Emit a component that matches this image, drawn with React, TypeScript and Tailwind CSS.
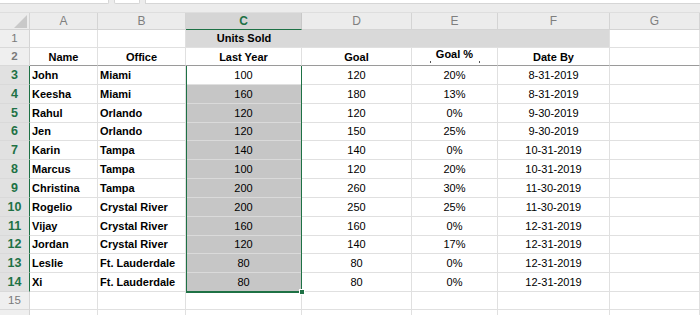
import React from "react";

const colW = ["w-[68px]", "w-[88px]", "w-[116px]", "w-[110px]", "w-[86px]", "w-[112px]", "w-[90px]"];
const letters = ["A", "B", "C", "D", "E", "F", "G"];

const data: [string, string, string, string, string, string][] = [
  ["John", "Miami", "100", "120", "20%", "8-31-2019"],
  ["Keesha", "Miami", "160", "180", "13%", "8-31-2019"],
  ["Rahul", "Orlando", "120", "120", "0%", "9-30-2019"],
  ["Jen", "Orlando", "120", "150", "25%", "9-30-2019"],
  ["Karin", "Tampa", "140", "140", "0%", "10-31-2019"],
  ["Marcus", "Tampa", "100", "120", "20%", "10-31-2019"],
  ["Christina", "Tampa", "200", "260", "30%", "11-30-2019"],
  ["Rogelio", "Crystal River", "200", "250", "25%", "11-30-2019"],
  ["Vijay", "Crystal River", "160", "160", "0%", "12-31-2019"],
  ["Jordan", "Crystal River", "120", "140", "17%", "12-31-2019"],
  ["Leslie", "Ft. Lauderdale", "80", "80", "0%", "12-31-2019"],
  ["Xi", "Ft. Lauderdale", "80", "80", "0%", "12-31-2019"],
];

const rowH = ["h-[19px]", "h-[19px]", "h-[19px]", "h-[18px]", "h-[19px]", "h-[19px]", "h-[19px]", "h-[19px]", "h-[19px]", "h-[18px]", "h-[19px]", "h-[19px]"];

function RowHead({ n, active, h }: { n: number; active?: boolean; h: string }) {
  return (
    <div
      className={`${h} w-[30px] shrink-0 flex items-center justify-center border-b border-b-[#d9d9d9] ${
        active
          ? "bg-[#e1e1e1] border-r border-r-[#1e7145] text-[#1e7145] font-bold text-[12.5px]"
          : "bg-[#efefef] border-r border-r-[#d4d4d4] text-[#7a7a7a] text-[11.5px]"
      }`}
    >
      {n}
    </div>
  );
}

export default function App() {
  return (
    <div className="w-[700px] h-[315px] overflow-hidden bg-white font-['Liberation_Sans',Arial,sans-serif] text-black">
      {/* top band */}
      <div className="h-[12px] bg-[#ececec] flex gap-[5px] items-start">
        <div className="w-[109px] h-[4px] bg-white border-b border-r border-[#d6d6d6] rounded-br-[2px]" />
        <div className="w-[26px] h-[4px] bg-white border-b border-x border-[#d6d6d6] rounded-b-[2px]" />
        <div className="flex-1 h-[4px] bg-white border-b border-l border-[#d6d6d6]" />
      </div>

      {/* column header */}
      <div className="flex h-[18px] bg-[#ececec] border-t border-[#dedede]">
        <div className="w-[30px] shrink-0 border-r border-b border-[#d4d4d4] relative">
          <svg width="30" height="17" className="absolute left-0 top-0">
            <polygon points="14,15 27,15 27,2" fill="#c9c9c9" />
          </svg>
        </div>
        {letters.map((l, i) =>
          l === "C" ? (
            <div
              key={l}
              className={`${colW[i]} shrink-0 flex items-center justify-center bg-[#d5d5d5] border-r border-r-[#c8c8c8] border-b border-b-[#1e7145] text-[#1e7145] font-bold text-[12px]`}
            >
              {l}
            </div>
          ) : (
            <div
              key={l}
              className={`${colW[i]} shrink-0 flex items-center justify-center border-r border-b border-[#d4d4d4] text-[#7f7f7f] text-[12px]`}
            >
              {l}
            </div>
          )
        )}
      </div>

      {/* row 1 */}
      <div className="flex h-[18px] text-[11px]">
        <RowHead n={1} h="h-[18px]" />
        <div className={`${colW[0]} shrink-0 border-r border-b border-[#e0e0e0]`} />
        <div className={`${colW[1]} shrink-0 border-r border-b border-[#e0e0e0]`} />
        <div className="w-[424px] shrink-0 bg-[#d9d9d9] border-r border-b border-[#e0e0e0] flex items-center">
          <div className="w-[116px] text-center font-bold">Units Sold</div>
        </div>
        <div className={`${colW[6]} shrink-0 border-r border-b border-[#e0e0e0]`} />
      </div>

      {/* row 2 */}
      <div className="flex h-[18px] text-[11px] font-bold">
        <RowHead n={2} h="h-[18px]" />
        <div className={`${colW[0]} shrink-0 border-r border-r-[#e0e0e0] border-b border-b-[#9a9a9a] flex items-center justify-center pt-[1px]`}>Name</div>
        <div className={`${colW[1]} shrink-0 border-r border-r-[#e0e0e0] border-b border-b-[#9a9a9a] flex items-center justify-center pt-[1px]`}>Office</div>
        <div className={`${colW[2]} shrink-0 border-r border-r-[#e0e0e0] border-b border-b-[#9a9a9a] flex items-center justify-center pt-[1px]`}>Last Year</div>
        <div className={`${colW[3]} shrink-0 border-r border-r-[#e0e0e0] border-b border-b-[#9a9a9a] flex items-center justify-center pt-[1px]`}>Goal</div>
        <div className={`${colW[4]} shrink-0 border-r border-r-[#e0e0e0] border-b border-b-[#9a9a9a] flex flex-col items-center leading-[12px] pt-[-1px]`}>
          <span>Goal %</span>
          <div className="w-[50px] flex justify-between mt-[1px]">
            <span className="w-[1px] h-[2px] bg-[#555]" />
            <span className="w-[1px] h-[2px] bg-[#555]" />
          </div>
        </div>
        <div className={`${colW[5]} shrink-0 border-r border-r-[#e0e0e0] border-b border-b-[#9a9a9a] flex items-center justify-center pt-[1px]`}>Date By</div>
        <div className={`${colW[6]} shrink-0 border-r border-r-[#e0e0e0] border-b border-b-[#9a9a9a]`} />
      </div>

      {/* data rows */}
      <div className="relative">
        {data.map((r, idx) => (
          <div key={idx} className={`flex ${rowH[idx]} text-[11px]`}>
            <RowHead n={idx + 3} active h={rowH[idx]} />
            <div className={`${colW[0]} shrink-0 border-r border-b border-[#e0e0e0] flex items-center pl-[2px] font-bold`}>{r[0]}</div>
            <div className={`${colW[1]} shrink-0 border-r border-b border-[#e0e0e0] flex items-center pl-[2px] font-bold`}>{r[1]}</div>
            <div
              className={`${colW[2]} shrink-0 border-r border-b flex items-center justify-center ${
                idx === 0 ? "bg-white border-[#e0e0e0]" : "bg-[#c6c6c6] border-[#dadada]"
              }`}
            >
              {r[2]}
            </div>
            <div className={`${colW[3]} shrink-0 border-r border-b border-[#e0e0e0] flex items-center justify-center`}>{r[3]}</div>
            <div className={`${colW[4]} shrink-0 border-r border-b border-[#e0e0e0] flex items-center justify-center`}>{r[4]}</div>
            <div className={`${colW[5]} shrink-0 border-r border-b border-[#e0e0e0] flex items-center justify-center`}>{r[5]}</div>
            <div className={`${colW[6]} shrink-0 border-r border-b border-[#e0e0e0]`} />
          </div>
        ))}
        {/* selection overlay */}
        <div className="absolute left-[186px] top-0 bottom-[-1px] w-[116px] border-l border-r border-b-2 border-[#1e7145] pointer-events-none">
          <div className="absolute right-[-4px] bottom-[-4px] w-[6px] h-[6px] bg-[#1e7145] border border-white" />
        </div>
      </div>

      {/* row 15 */}
      <div className="flex h-[18px] text-[11px]">
        <RowHead n={15} h="h-[18px]" />
        {colW.map((w, i) => (
          <div key={i} className={`${w} shrink-0 border-r border-b border-[#e0e0e0]`} />
        ))}
      </div>
      {/* row 16 partial */}
      <div className="flex h-[18px]">
        <div className="w-[30px] h-[18px] shrink-0 bg-[#efefef] border-r border-[#d4d4d4]" />
        {colW.map((w, i) => (
          <div key={i} className={`${w} shrink-0 border-r border-[#e0e0e0]`} />
        ))}
      </div>
    </div>
  );
}
